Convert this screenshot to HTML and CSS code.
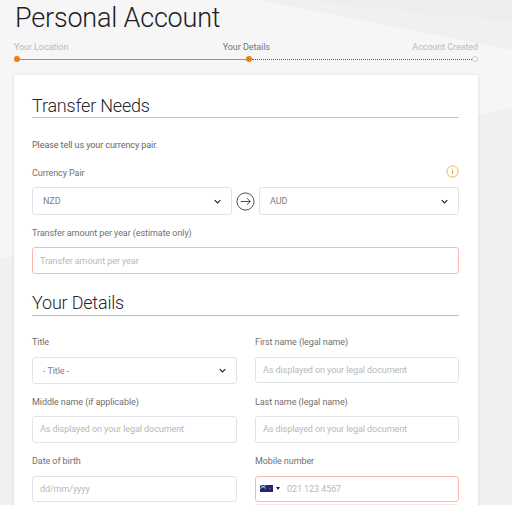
FILE: index.html
```html
<!DOCTYPE html>
<html lang="en">
<head>
<meta charset="utf-8">
<title>Personal Account</title>
<link rel="stylesheet" href="styles.css">
</head>
<body>
<svg class="backdrop" viewBox="0 0 512 505" width="512" height="505" aria-hidden="true">
  <polygon points="258,0 512,0 512,50" fill="#f0f0f1"/>
  <polygon points="300,0 512,0 512,22 430,14" fill="#eeeeef"/>
  <polygon points="0,260 14,255 14,505 0,505" fill="#f0f0f0"/>
  <polygon points="478,116 512,107 512,505 478,505" fill="#f0f0f1"/>
</svg>
<main class="page">
  <h1 class="page-title">Personal Account</h1>
  <div class="stepper">
    <div class="step-labels">
      <span class="step-done">Your Location</span>
      <span class="step-current">Your Details</span>
      <span class="step-done">Account Created</span>
    </div>
    <div class="step-track">
      <span class="dot dot-on"></span>
      <span class="line line-solid"></span>
      <span class="dot dot-on"></span>
      <span class="line line-dotted"></span>
      <span class="dot dot-off"></span>
    </div>
  </div>
  <section class="card">
    <h2 class="section-title">Transfer Needs</h2>
    <p class="intro">Please tell us your currency pair.</p>
    <div class="label-row">
      <label class="label">Currency Pair</label>
      <svg class="info" viewBox="0 0 14 14" width="13" height="13"><circle cx="7" cy="7" r="6" fill="none" stroke="#f5a94a" stroke-width="1"/><path d="M7 4v1M7 6v4" stroke="#ef8a17" stroke-width="1"/></svg>
    </div>
    <div class="pair">
      <div class="field select"><span>NZD</span><svg class="chev" viewBox="0 0 10 6" width="7" height="5"><path d="M1 1l4 4 4-4" fill="none" stroke="#222" stroke-width="1.6"/></svg></div>
      <svg class="arrow" viewBox="0 0 20 20" width="19" height="19"><circle cx="10" cy="10" r="9" fill="none" stroke="#444" stroke-width="1"/><path d="M5 10h10M11.500 6.500L15 10l-3.500 3.500" fill="none" stroke="#444" stroke-width="1"/></svg>
      <div class="field select"><span>AUD</span><svg class="chev" viewBox="0 0 10 6" width="7" height="5"><path d="M1 1l4 4 4-4" fill="none" stroke="#222" stroke-width="1.6"/></svg></div>
    </div>
    <label class="label label-gap">Transfer amount per year (estimate only)</label>
    <div class="field input alert"><span class="placeholder">Transfer amount per year</span></div>

    <h2 class="section-title details-title">Your Details</h2>
    <div class="grid">
      <div class="cell">
        <label class="label">Title</label>
        <div class="field select tall"><span>- Title -</span><svg class="chev" viewBox="0 0 10 6" width="7" height="5"><path d="M1 1l4 4 4-4" fill="none" stroke="#222" stroke-width="1.6"/></svg></div>
      </div>
      <div class="cell">
        <label class="label">First name (legal name)</label>
        <div class="field input"><span class="placeholder">As displayed on your legal document</span></div>
      </div>
      <div class="cell">
        <label class="label">Middle name (if applicable)</label>
        <div class="field input"><span class="placeholder">As displayed on your legal document</span></div>
      </div>
      <div class="cell">
        <label class="label">Last name (legal name)</label>
        <div class="field input"><span class="placeholder">As displayed on your legal document</span></div>
      </div>
      <div class="cell">
        <label class="label">Date of birth</label>
        <div class="field input"><span class="placeholder">dd/mm/yyyy</span></div>
      </div>
      <div class="cell">
        <label class="label">Mobile number</label>
        <div class="field input alert phone">
          <svg class="flag" viewBox="0 0 13 7" width="13" height="7"><rect width="13" height="7" fill="#1b2a78"/><path d="M0 0l6 3.500M6 0L0 3.500" stroke="#d9d9e6" stroke-width=".8"/><circle cx="10" cy="3.500" r=".8" fill="#d8405a"/></svg>
          <span class="caret"></span>
          <span class="placeholder">021 123 4567</span>
        </div>
        <div class="error-strip"></div>
      </div>
    </div>
  </section>
</main>
</body>
</html>
```
FILE: styles.css
```css
* { box-sizing: border-box; }
html, body { margin: 0; height: 505px; overflow: hidden; }
body {
  position: relative;
  background: #f6f6f6;
  font-family: "Roboto", "Liberation Sans", sans-serif;
  color: #555;
}
.backdrop { position: absolute; top: 0; left: 0; }
.page { position: relative; padding: 0 34px 0 14px; }
.page-title {
  margin: 0;
  padding-left: 1px;
  font-size: 27px;
  line-height: 36px;
  font-weight: 300;
  letter-spacing: -.2px;
  color: #1d1d22;
}
.stepper { margin-top: 5px; height: 34px; }
.step-labels {
  display: flex;
  justify-content: space-between;
  font-size: 9px;
  line-height: 12px;
  letter-spacing: -.08px;
  color: #b9b9b9;
}
.step-current { color: #777; margin-left: 12px; }
.step-track { display: flex; align-items: center; height: 8px; margin-top: 2px; }
.dot { flex: none; width: 6px; height: 6px; border-radius: 50%; }
.dot-on { background: #ef7d12; }
.dot-off { background: #fff; border: 1px solid #c9c9c9; }
.line { height: 0; }
.line-solid { flex: 226; border-top: 1px solid #ef7d12; }
.line-dotted { flex: 220; border-top: 1px dotted #b8352a; }
.card {
  padding: 20px 19px 0 18px;
  height: 440px;
  background: #fff;
  box-shadow: 0 0 3px rgba(0,0,0,.12);
}
.section-title {
  margin: 0;
  padding-bottom: 1px;
  height: 23px;
  font-size: 18px;
  line-height: 22px;
  font-weight: 300;
  letter-spacing: -.2px;
  color: #26262c;
  border-bottom: 1px solid #efb7a3;
}
.intro { margin: 21px 0 0; font-size: 9px; line-height: 12px; letter-spacing: -.08px; color: #666; }
.label-row { display: flex; justify-content: space-between; align-items: center; margin-top: 14px; height: 16px; }
.label { display: block; font-size: 9px; line-height: 12px; letter-spacing: -.08px; color: #707070; }
.info { margin-top: -4px; }
.pair { display: flex; align-items: center; gap: 4px; margin-top: 6px; }
.pair .field { flex: 1; }
.arrow { flex: none; }
.label-gap { margin-top: 12px; }
.field {
  display: flex;
  align-items: center;
  background: #fff;
  border: 1px solid #e2e3e8;
  border-radius: 3px;
  font-size: 9px;
  letter-spacing: -.08px;
  color: #808080;
}
.select { height: 28px; padding: 0 10px; justify-content: space-between; }
.input { height: 27px; padding: 0 7px; }
.label-gap + .field { margin-top: 8px; }
.alert { border-color: #fdb8ad; }
.placeholder { color: #b8b8b8; }
.details-title { margin-top: 18px; height: 24px; border-bottom-color: #f2a98f; }
.grid { display: grid; grid-template-columns: 205px 204px; column-gap: 18px; margin-top: 20px; }
.cell { height: 59.500px; }
.cell .field { margin-top: 8.500px; }
.cell .input { height: 26.500px; }
.cell .tall { height: 27px; margin-top: 9px; }
.phone { gap: 3px; padding-left: 4px; }
.flag { flex: none; }
.caret { width: 0; height: 0; border: 2px solid transparent; border-top: 3px solid #222; border-bottom: 0; margin-right: 4px; }
.error-strip { height: 6px; margin-top: 1.500px; background: #fde4df; border-radius: 3px; }
```
